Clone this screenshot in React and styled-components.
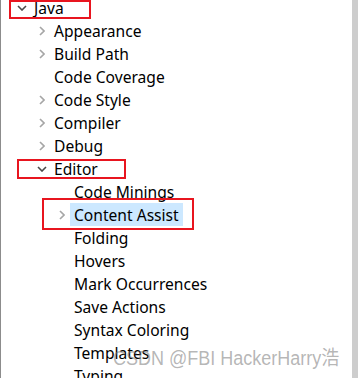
import React from "react";
import styled, { createGlobalStyle } from "styled-components";

const GlobalStyle = createGlobalStyle`
  html, body {
    margin: 0;
    padding: 0;
    background: #ffffff;
  }
`;

const Page = styled.div`
  position: relative;
  width: 358px;
  height: 378px;
  display: flex;
  overflow: hidden;
  background: #ffffff;
  font-family: "Noto Sans", "Open Sans", sans-serif;
`;

const Tree = styled.ul`
  flex: 1;
  list-style: none;
  margin: -4px 0 0 0;
  padding: 0;
  border-left: 1px solid #8c8c8c;
`;

const Row = styled.li`
  position: relative;
  display: flex;
  align-items: center;
  height: 23px;
  padding-left: ${(p) => 12 + p.$level * 20}px;
`;

const Toggle = styled.span`
  width: 17px;
  height: 23px;
  display: flex;
  align-items: center;
  justify-content: center;
  color: ${(p) => (p.$open ? "#4a4a4a" : "#a6a6a6")};
`;

const Label = styled.span`
  display: flex;
  align-items: center;
  height: 23px;
  padding: 0 4px;
  font-size: 15.6px;
  color: #000000;
  white-space: nowrap;
  background: ${(p) => (p.$selected ? "#cce8ff" : "transparent")};
`;

const Mark = styled.span`
  position: absolute;
  left: ${(p) => p.$left}px;
  top: ${(p) => p.$top}px;
  width: ${(p) => p.$width}px;
  height: ${(p) => p.$height}px;
  border: 2px solid #e8151f;
  box-sizing: border-box;
  pointer-events: none;
`;

const Scrollbar = styled.div`
  width: 6px;
  flex: none;
  background: #cdcdcd;
`;

const Watermark = styled.div`
  position: absolute;
  left: 113px;
  top: 342px;
  font-family: "Liberation Sans", "Noto Sans CJK SC", sans-serif;
  font-size: 20px;
  color: rgba(120, 120, 120, 0.55);
  white-space: nowrap;
  transform: scaleX(0.9);
  transform-origin: left center;
  pointer-events: none;
`;

const Chevron = ({ open }) =>
  open ? (
    <svg width="10" height="6" viewBox="0 0 10 6">
      <path d="M1 1 L5 5 L9 1" fill="none" stroke="currentColor" strokeWidth="1.6" />
    </svg>
  ) : (
    <svg width="6" height="10" viewBox="0 0 6 10">
      <path d="M1 1 L5 5 L1 9" fill="none" stroke="currentColor" strokeWidth="1.6" />
    </svg>
  );

const items = [
  { label: "Java", level: 0, toggle: "open", mark: { left: 8, top: 4, width: 82, height: 19 } },
  { label: "Appearance", level: 1, toggle: "closed" },
  { label: "Build Path", level: 1, toggle: "closed" },
  { label: "Code Coverage", level: 1 },
  { label: "Code Style", level: 1, toggle: "closed" },
  { label: "Compiler", level: 1, toggle: "closed" },
  { label: "Debug", level: 1, toggle: "closed" },
  { label: "Editor", level: 1, toggle: "open", mark: { left: 16, top: 2, width: 109, height: 20 } },
  { label: "Code Minings", level: 2 },
  {
    label: "Content Assist",
    level: 2,
    toggle: "closed",
    selected: true,
    mark: { left: 41, top: -5, width: 152, height: 32 },
  },
  { label: "Folding", level: 2 },
  { label: "Hovers", level: 2 },
  { label: "Mark Occurrences", level: 2 },
  { label: "Save Actions", level: 2 },
  { label: "Syntax Coloring", level: 2 },
  { label: "Templates", level: 2 },
  { label: "Typing", level: 2 },
];

export default function App() {
  return (
    <>
      <GlobalStyle />
      <Page>
        <Tree>
          {items.map((it) => (
            <Row key={it.label} $level={it.level}>
              <Toggle $open={it.toggle === "open"}>
                {it.toggle && <Chevron open={it.toggle === "open"} />}
              </Toggle>
              <Label $selected={it.selected}>{it.label}</Label>
              {it.mark && (
                <Mark
                  $left={it.mark.left}
                  $top={it.mark.top}
                  $width={it.mark.width}
                  $height={it.mark.height}
                />
              )}
            </Row>
          ))}
        </Tree>
        <Scrollbar />
        <Watermark>CSDN @FBI HackerHarry浩</Watermark>
      </Page>
    </>
  );
}
